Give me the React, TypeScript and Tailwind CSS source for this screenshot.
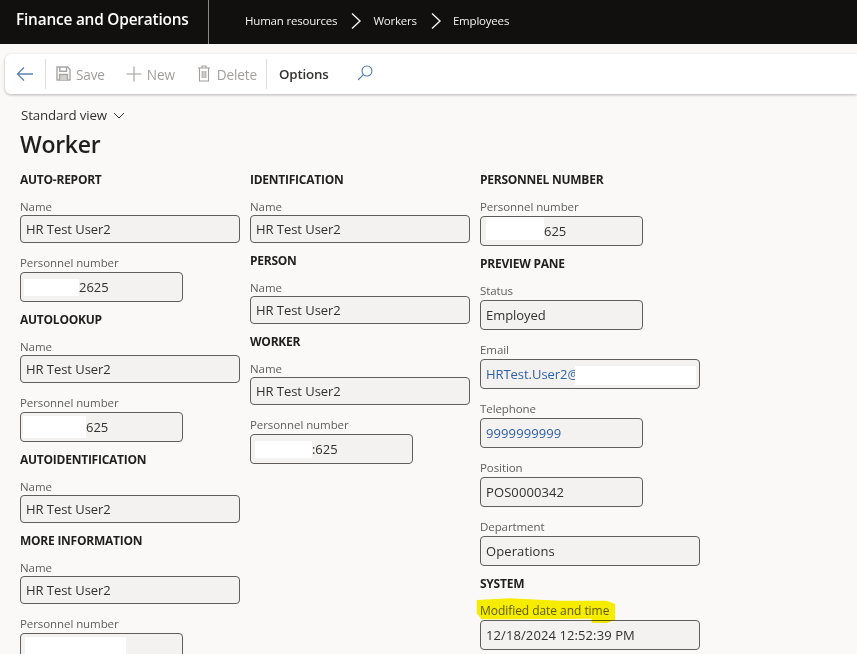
const font = { fontFamily: '"Open Sans", "Noto Sans", sans-serif' };

type Kind = "name" | "short" | "wide";

function Marker() {
  return (
    <svg className="absolute left-[-4px] top-[-4px] z-10 mix-blend-multiply pointer-events-none" width="140" height="26" viewBox="0 0 140 26">
      <path
        d="M0.7 2 L34 0.3 L84 2.7 L130.7 2.7 L139 6 L139 22 L130.7 25 L115.7 24.7 L115.7 20.7 L17.3 21.3 L5.7 21.3 L0.7 15.3 Z"
        fill="#fbf200"
      />
    </svg>
  );
}

function Field({ label, kind, children, marked }: { label: string; kind: Kind; children: React.ReactNode; marked?: boolean }) {
  const boxH = kind === "name" ? "h-[28px]" : "h-[30px]";
  const w = kind === "short" ? "w-[163px]" : "w-[220px]";
  const labelH = kind === "name" ? "h-[17px]" : "h-[18px]";
  return (
    <div>
      <div className={`${labelH} relative flex items-center text-[#605e5c] ${marked ? "text-[12px] tracking-[-0.05px]" : "text-[11.5px] tracking-[-0.08px]"}`}>
        {marked && <Marker />}
        {label}
      </div>
      <div className={`${boxH} ${w} border border-[#605e5c] rounded-[4px] bg-[#f3f2f1] flex items-center overflow-hidden text-[13px] text-[#323130] tracking-[-0.05px]`}>
        {children}
      </div>
    </div>
  );
}

function Heading({ children }: { children: React.ReactNode }) {
  return <div className="h-[18px] flex items-center text-[12px] font-bold text-[#201f1e] tracking-[-0.25px]">{children}</div>;
}

function Val({ children, link, wide }: { children: React.ReactNode; link?: boolean; wide?: boolean }) {
  return <span className={`pl-[5px] pt-[1px] whitespace-nowrap ${link ? "text-[#2f5fa8]" : ""} ${wide ? "tracking-[0.1px]" : ""}`}>{children}</span>;
}

function Redacted({ block, pad, children }: { block: string; pad: string; children?: React.ReactNode }) {
  return (
    <div className={`flex items-center whitespace-nowrap ${pad}`}>
      <div className={`bg-white shrink-0 ${block}`} />
      <span className="pt-[2px]">{children}</span>
    </div>
  );
}

function Section({ children }: { children: React.ReactNode }) {
  return <div className="flex flex-col gap-[11px] pt-[9px] pb-[9px]">{children}</div>;
}

function Chevron() {
  return (
    <svg width="12" height="18" viewBox="0 0 12 18" fill="none" stroke="#f3f2f1" strokeWidth="1.4">
      <path d="M2 1.5 L10 9 L2 16.5" />
    </svg>
  );
}

export default function App() {
  return (
    <div style={font} className="w-[857px] h-[654px] overflow-hidden bg-[#faf9f8]">
      <header className="h-[44px] bg-[#11100f] flex items-center text-white">
        <div className="w-[209px] h-[44px] border-r border-[#8a8886] flex items-center pl-[16px] text-[15.4px] font-semibold tracking-[-0.2px] pb-[5px] whitespace-nowrap">
          Finance and Operations
        </div>
        <nav className="flex items-center pl-[36px] pb-[2px] text-[11.5px] tracking-[-0.2px] text-[#f3f2f1]">
          <span>Human resources</span>
          <span className="ml-[13px] mr-[11px] flex"><Chevron /></span>
          <span>Workers</span>
          <span className="ml-[13px] mr-[11px] flex"><Chevron /></span>
          <span>Employees</span>
        </nav>
      </header>

      <div className="pt-[10px] pl-[5px]">
        <div className="h-[40px] bg-white rounded-l-[6px] shadow-[0_1px_3px_rgba(0,0,0,0.28)] flex items-center text-[13.6px]">
          <button className="w-[41px] h-[30px] border-r border-[#e1dfdd] flex items-center justify-center">
            <svg width="18" height="16" viewBox="0 0 18 16" fill="none" stroke="#5b82ad" strokeWidth="1.3">
              <path d="M17 8 H1.5 M8 1.5 L1.5 8 L8 14.5" />
            </svg>
          </button>
          <div className="flex items-center text-[#a19f9d] tracking-[-0.15px]">
            <svg className="ml-[10px]" width="15" height="15" viewBox="0 0 15 15" fill="none" stroke="#a8a6a4" strokeWidth="1.4">
              <path d="M1 1 H11.5 L14 3.5 V14 H1 Z" />
              <path d="M3.8 1 V5.2 H10.5 V1" />
              <path d="M3.5 14 V8.5 H11.5 V14" fill="#d2d0ce" />
            </svg>
            <span className="ml-[5px] pt-[2px]">Save</span>
            <svg className="ml-[21px]" width="16" height="16" viewBox="0 0 16 16" fill="none" stroke="#a19f9d" strokeWidth="1.1">
              <path d="M8 0.5 V15.5 M0.5 8 H15.5" />
            </svg>
            <span className="ml-[5px] pt-[2px]">New</span>
            <svg className="ml-[23px]" width="12" height="17" viewBox="0 0 12 17" fill="none" stroke="#a19f9d" strokeWidth="1.1">
              <path d="M0 3 H12 M4 3 V1 H8 V3 M1.5 3 V16 H10.5 V3 M4.2 6 V13 M6 6 V13 M7.8 6 V13" />
            </svg>
            <span className="ml-[7px] pt-[2px]">Delete</span>
          </div>
          <div className="ml-[9px] h-[30px] border-l border-[#e1dfdd] flex items-center">
            <span className="ml-[12px] pt-[2px] text-[13.3px] font-semibold text-[#323130] tracking-[-0.15px]">Options</span>
            <svg className="ml-[28px] mb-[3px]" width="16" height="16" viewBox="0 0 16 16" fill="none" stroke="#4f7cb5" strokeWidth="1.1">
              <circle cx="10" cy="6" r="5" />
              <path d="M6.4 9.6 L1 15" />
            </svg>
          </div>
        </div>
      </div>

      <div className="pl-[20px]">
        <div className="mt-[13px] h-[18px] pl-[1px] flex items-center gap-[6px] text-[13.3px] text-[#323130] tracking-[-0.15px]">
          Standard view
          <svg width="12" height="8" viewBox="0 0 12 8" fill="none" stroke="#323130" strokeWidth="1">
            <path d="M1 1 L6 6 L11 1" />
          </svg>
        </div>
        <h1 className="mt-[2px] h-[34px] flex items-center text-[23px] font-semibold text-[#201f1e] tracking-[-0.3px]">Worker</h1>

        <div className="flex items-start mt-[10px]">
          <div className="w-[230px]">
            <Heading>AUTO-REPORT</Heading>
            <Section>
              <Field label="Name" kind="name"><Val>HR Test User2</Val></Field>
              <Field label="Personnel number" kind="short"><Redacted pad="pl-[3px]" block="w-[55px] h-[17px]">2625</Redacted></Field>
            </Section>
            <Heading>AUTOLOOKUP</Heading>
            <Section>
              <Field label="Name" kind="name"><Val>HR Test User2</Val></Field>
              <Field label="Personnel number" kind="short"><Redacted pad="pl-[2px]" block="w-[63px] h-[22px]">625</Redacted></Field>
            </Section>
            <Heading>AUTOIDENTIFICATION</Heading>
            <Section>
              <Field label="Name" kind="name"><Val>HR Test User2</Val></Field>
            </Section>
            <Heading>MORE INFORMATION</Heading>
            <Section>
              <Field label="Name" kind="name"><Val>HR Test User2</Val></Field>
              <Field label="Personnel number" kind="short"><Redacted pad="pl-[4px]" block="w-[101px] h-[22px]" /></Field>
            </Section>
          </div>
          <div className="w-[230px]">
            <Heading>IDENTIFICATION</Heading>
            <Section>
              <Field label="Name" kind="name"><Val>HR Test User2</Val></Field>
            </Section>
            <Heading>PERSON</Heading>
            <Section>
              <Field label="Name" kind="name"><Val>HR Test User2</Val></Field>
            </Section>
            <Heading>WORKER</Heading>
            <Section>
              <Field label="Name" kind="name"><Val>HR Test User2</Val></Field>
              <Field label="Personnel number" kind="short"><Redacted pad="pl-[4px]" block="w-[57px] h-[17px]">:625</Redacted></Field>
            </Section>
          </div>
          <div className="w-[230px]">
            <Heading>PERSONNEL NUMBER</Heading>
            <Section>
              <Field label="Personnel number" kind="short"><Redacted pad="pl-[5px]" block="w-[58px] h-[23px] mb-[5px]">625</Redacted></Field>
            </Section>
            <Heading>PREVIEW PANE</Heading>
            <Section>
              <Field label="Status" kind="short"><Val>Employed</Val></Field>
              <Field label="Email" kind="wide">
                <Val link>HRTest.User2@</Val>
                <div className="relative -left-[4px] mt-[3px] h-[19px] w-[121px] bg-white shrink-0" />
              </Field>
              <Field label="Telephone" kind="short"><Val link wide>9999999999</Val></Field>
              <Field label="Position" kind="short"><Val wide>POS0000342</Val></Field>
              <Field label="Department" kind="wide"><Val wide>Operations</Val></Field>
            </Section>
            <Heading>SYSTEM</Heading>
            <Section>
              <Field label="Modified date and time" kind="wide" marked><Val wide>12/18/2024 12:52:39 PM</Val></Field>
            </Section>
          </div>
        </div>
      </div>
    </div>
  );
}
